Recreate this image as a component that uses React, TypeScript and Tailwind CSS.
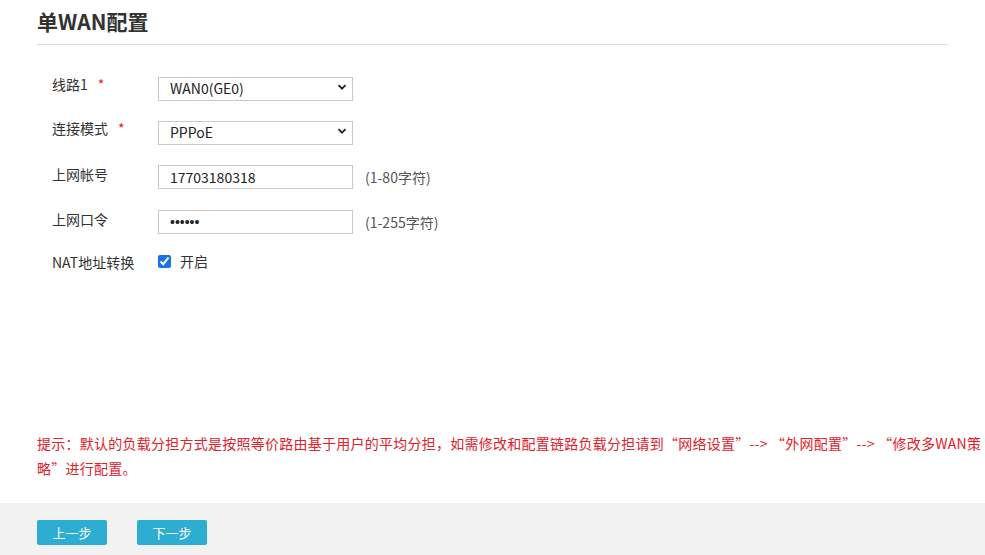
import React from "react";

const font = { fontFamily: '"Noto Sans CJK SC", "Noto Sans", sans-serif' };

const Chevron = () => (
  <svg
    className="pointer-events-none absolute right-[6px] top-1/2 -translate-y-1/2"
    width="10"
    height="10"
    viewBox="0 0 10 10"
  >
    <path d="M1.5 3.2 L5 6.7 L8.5 3.2" fill="none" stroke="#222" strokeWidth="1.8" />
  </svg>
);

const SelectBox = ({ value }: { value: string }) => (
  <div className="relative w-[195px] h-[24px]">
    <select
      defaultValue={value}
      className="appearance-none w-full h-full border border-[#c8c8c8] bg-white pl-[11px] text-[14px] text-[#222] outline-none"
    >
      <option>{value}</option>
    </select>
    <Chevron />
  </div>
);

const Row = ({
  label,
  required,
  children,
  hint,
  className,
}: {
  label: string;
  required?: boolean;
  children: React.ReactNode;
  hint?: string;
  className?: string;
}) => (
  <div className={"flex items-center " + (className ?? "")}>
    <div className="w-[106px] flex items-center text-[14px] text-[#333] -mt-[6px]">
      <span>{label}</span>
      {required && <span className="ml-[10px] text-[#e0242a] text-[14px]">*</span>}
    </div>
    {children}
    {hint && <span className="ml-[12px] text-[14px] text-[#555]">{hint}</span>}
  </div>
);

export default function App() {
  return (
    <div className="w-[985px] h-[555px] flex flex-col bg-white" style={font}>
      <div className="flex-1 px-[37px]">
        <h1 className="pt-[7px] text-[21px] font-bold text-[#333] leading-[28px]">单WAN配置</h1>
        <div className="mt-[9px] w-[911px] border-t border-[#dcdcdc]" />

        <div className="pl-[15px] pt-[30px]">
          <Row label="线路1" required>
            <SelectBox value="WAN0(GE0)" />
          </Row>
          <Row label="连接模式" required className="mt-[20px]">
            <SelectBox value="PPPoE" />
          </Row>
          <Row label="上网帐号" hint="(1-80字符)" className="mt-[22px]">
            <input
              defaultValue="17703180318"
              className="w-[195px] h-[24px] border border-[#c8c8c8] px-[11px] text-[14px] text-[#222] outline-none"
            />
          </Row>
          <Row label="上网口令" hint="(1-255字符)" className="mt-[21px]">
            <input
              type="password"
              defaultValue="123456"
              className="w-[195px] h-[24px] border border-[#c8c8c8] px-[11px] text-[14px] text-[#222] outline-none font-['Liberation_Sans',sans-serif]"
            />
          </Row>
          <div className="mt-[15px] flex items-center">
            <div className="w-[106px] text-[14px] text-[#333] mt-[3px]">NAT地址转换</div>
            <label className="flex items-center text-[14px] text-[#333]">
              <input type="checkbox" defaultChecked className="w-[13px] h-[13px] accent-[#1a73e8]" />
              <span className="ml-[9px]">开启</span>
            </label>
          </div>
        </div>

        <p className="mt-[158px] -mr-[37px] text-[14px] leading-[25px] tracking-[0.25px] text-[#e0202a]">
          <span className="block whitespace-nowrap">
            提示：默认的负载分担方式是按照等价路由基于用户的平均分担，如需修改和配置链路负载分担请到“网络设置”--&gt; “外网配置”--&gt; “修改多WAN策
          </span>
          <span className="block">略”进行配置。</span>
        </p>
      </div>

      <div className="h-[52px] bg-[#f2f2f2] px-[37px] pt-[17px] flex gap-[30px]">
        <button className="w-[70px] h-[25px] rounded-[2px] bg-[#2eadd3] text-white text-[13px]">上一步</button>
        <button className="w-[70px] h-[25px] rounded-[2px] bg-[#2eadd3] text-white text-[13px]">下一步</button>
      </div>
    </div>
  );
}
